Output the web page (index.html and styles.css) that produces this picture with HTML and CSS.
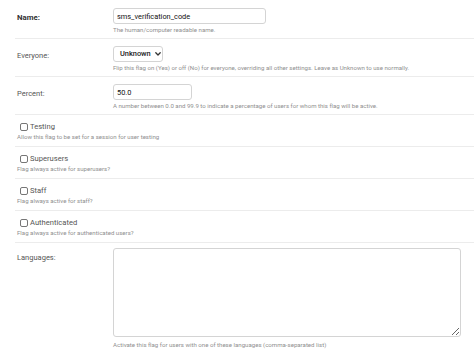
FILE: index.html
```html
<!DOCTYPE html>
<html lang="en">
<head>
<meta charset="utf-8">
<title>Flag</title>
<link rel="stylesheet" href="styles.css">
</head>
<body>
<fieldset class="module">
  <div class="form-row">
    <label class="field-label required" for="id_name">Name:</label>
    <div class="field-box">
      <input class="text-input name-input" id="id_name" type="text" value="sms_verification_code">
      <div class="help">The human/computer readable name.</div>
    </div>
  </div>
  <div class="form-row">
    <label class="field-label">Everyone:</label>
    <div class="field-box">
      <div class="select">
        <span class="select-value">Unknown</span>
        <svg class="chevron" width="6" height="4" viewBox="0 0 6 4"><path d="M0.8 0.8 L3 3 L5.2 0.8" fill="none" stroke="#333" stroke-width="1.3" stroke-linecap="round" stroke-linejoin="round"/></svg>
      </div>
      <div class="help">Flip this flag on (Yes) or off (No) for everyone, overriding all other settings. Leave as Unknown to use normally.</div>
    </div>
  </div>
  <div class="form-row">
    <label class="field-label" for="id_percent">Percent:</label>
    <div class="field-box">
      <input class="text-input percent-input" id="id_percent" type="text" value="50.0">
      <div class="help">A number between 0.0 and 99.9 to indicate a percentage of users for whom this flag will be active.</div>
    </div>
  </div>
  <div class="form-row check-row">
    <div class="check-line">
      <input class="checkbox" type="checkbox" id="id_testing">
      <label class="check-label" for="id_testing">Testing</label>
    </div>
    <div class="help">Allow this flag to be set for a session for user testing</div>
  </div>
  <div class="form-row check-row">
    <div class="check-line">
      <input class="checkbox" type="checkbox" id="id_superusers">
      <label class="check-label" for="id_superusers">Superusers</label>
    </div>
    <div class="help">Flag always active for superusers?</div>
  </div>
  <div class="form-row check-row">
    <div class="check-line">
      <input class="checkbox" type="checkbox" id="id_staff">
      <label class="check-label" for="id_staff">Staff</label>
    </div>
    <div class="help">Flag always active for staff?</div>
  </div>
  <div class="form-row check-row">
    <div class="check-line">
      <input class="checkbox" type="checkbox" id="id_authenticated">
      <label class="check-label" for="id_authenticated">Authenticated</label>
    </div>
    <div class="help">Flag always active for authenticated users?</div>
  </div>
  <div class="form-row lang-row">
    <label class="field-label" for="id_languages">Languages:</label>
    <div class="field-box">
      <textarea class="textarea" id="id_languages"></textarea>
      <div class="help help-lang">Activate this flag for users with one of these languages (comma-separated list)</div>
    </div>
  </div>
</fieldset>
</body>
</html>
```
FILE: styles.css
```css
html, body {
  margin: 0;
  padding: 0;
  background: #fff;
}

body {
  font-family: Roboto, "Liberation Sans", Arial, sans-serif;
  color: #333;
  width: 474px;
  height: 355px;
  overflow: hidden;
}

.module {
  border: 0;
  margin: 0 0 0 15px;
  padding: 0;
  min-width: 0;
}

.form-row {
  display: flex;
  border-bottom: 1px solid #ececec;
  padding: 7px 0 4px 2px;
}

.form-row:first-child {
  padding-top: 8px;
}

.field-label {
  width: 96px;
  flex: none;
  font-size: 7.5px;
  line-height: 16px;
  padding-top: 2px;
  color: #555;
}

.field-label.required {
  font-weight: 700;
  color: #333;
  font-size: 7.8px;
}

.field-box {
  display: flex;
  flex-direction: column;
  align-items: flex-start;
  min-width: 0;
}

.text-input {
  box-sizing: border-box;
  height: 16px;
  border: 1px solid #d4d4d4;
  border-radius: 3px;
  padding: 0 0 0 3px;
  margin: 0;
  font-family: inherit;
  font-size: 7.4px;
  font-weight: 400;
  color: #111;
  background: #fff;
  outline: none;
}

.name-input {
  width: 153px;
}

.percent-input {
  width: 79px;
}

.select {
  box-sizing: border-box;
  display: flex;
  align-items: center;
  width: 50px;
  height: 16px;
  border: 1px solid #d4d4d4;
  border-radius: 3px;
  padding: 0 0 0 6px;
  background: #fff;
}

.select-value {
  font-size: 7.4px;
  font-weight: 500;
  color: #222;
  line-height: 14px;
}

.chevron {
  margin-left: 4px;
  flex: none;
}

.help {
  font-size: 6.1px;
  line-height: 9px;
  margin-top: 1px;
  color: #8f8f8f;
  white-space: nowrap;
}

.check-row {
  flex-direction: column;
  padding-top: 7px;
  padding-bottom: 4px;
}

.check-line {
  display: flex;
  align-items: center;
  height: 10px;
}

.checkbox {
  appearance: none;
  -webkit-appearance: none;
  box-sizing: border-box;
  width: 8px;
  height: 8px;
  margin: 0 2px 0 3px;
  border: 1px solid #767676;
  border-radius: 2px;
  background: #fff;
}

.check-label {
  font-size: 7.6px;
  color: #555;
  line-height: 10px;
}

.check-row .help {
  margin-top: 0;
  line-height: 10px;
}

.lang-row {
  border-bottom: 0;
  padding-top: 5px;
}

.textarea {
  display: block;
  box-sizing: border-box;
  width: 348px;
  height: 89px;
  border: 1px solid #d4d4d4;
  border-radius: 3px;
  margin: 0;
  padding: 3px;
  font-family: inherit;
  font-size: 7.4px;
  resize: vertical;
  outline: none;
}

.help-lang {
  margin-top: 3px;
}
```
